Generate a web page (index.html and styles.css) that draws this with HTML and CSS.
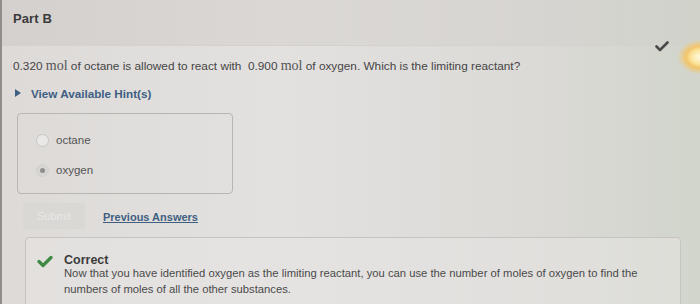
FILE: index.html
```html
<!DOCTYPE html>
<html>
<head>
<meta charset="utf-8">
<link rel="stylesheet" href="styles.css">
</head>
<body>
<div class="page">
  <header class="part-head">
    <span class="part-title">Part B</span>
  </header>
  <div class="status-check">
    <svg width="14" height="11" viewBox="0 0 14 11"><path d="M1.5 5.5 L5 9 L12.5 1.5" fill="none" stroke="#4a4a4a" stroke-width="2.6" stroke-linecap="round" stroke-linejoin="round"/></svg>
  </div>
  <div class="glare"></div>
  <main class="content">
    <p class="question">0.320 <span class="math">mol</span> of octane is allowed to react with &nbsp;0.900 <span class="math">mol</span> of oxygen. Which is the limiting reactant?</p>
    <div class="hint"><span class="tri"></span>View Available Hint(s)</div>
    <div class="choices">
      <label class="choice"><span class="radio"></span>octane</label>
      <label class="choice"><span class="radio checked"></span>oxygen</label>
    </div>
    <div class="actions">
      <button class="submit">Submit</button>
      <a class="prev">Previous Answers</a>
    </div>
    <div class="feedback">
      <svg class="fb-check" width="16" height="13" viewBox="0 0 16 13"><path d="M2 6.5 L6 10.5 L14 2.5" fill="none" stroke="#3f8a45" stroke-width="3.2" stroke-linecap="round" stroke-linejoin="round"/></svg>
      <div class="fb-body">
        <div class="fb-title">Correct</div>
        <div class="fb-text">Now that you have identified oxygen as the limiting reactant, you can use the number of moles of oxygen to find the numbers of moles of all the other substances.</div>
      </div>
    </div>
  </main>
</div>
</body>
</html>
```
FILE: styles.css
```css
html, body {
  margin: 0;
  padding: 0;
}
body {
  width: 700px;
  height: 304px;
  overflow: hidden;
  font-family: "Liberation Sans", Arial, sans-serif;
  background: linear-gradient(90deg, #dddad8 0%, #e3e1df 40%, #dcdad7 75%, #d1d5cb 100%);
}
.page {
  position: relative;
  height: 304px;
  border-left: 2px solid #8f8c89;
  box-sizing: border-box;
}
.part-head {
  height: 46px;
  border-bottom: 1px solid #d4d1cf;
  background: linear-gradient(90deg, rgba(200,194,192,0.4), rgba(205,203,198,0.25));
  padding: 9px 0 0 11px;
  box-sizing: border-box;
}
.part-title {
  font-size: 13px;
  font-weight: bold;
  color: #3a3a3a;
  letter-spacing: 0.1px;
}
.status-check {
  position: absolute;
  left: 653px;
  top: 38px;
}
.glare {
  position: absolute;
  left: 676px;
  top: 40px;
  width: 44px;
  height: 34px;
  border-radius: 50%;
  background: radial-gradient(ellipse at center, #fffbe2 0%, #fbe39a 30%, #f2c46a 45%, rgba(240,200,120,0.4) 62%, rgba(230,220,200,0) 75%);
}
.content {
  padding: 0 0 0 11px;
}
.question {
  margin: 12px 0 0 0;
  font-size: 11.8px;
  color: #454545;
  line-height: 16px;
}
.math {
  font-family: "Liberation Serif", "Times New Roman", serif;
  font-size: 14px;
  color: #555;
}
.hint {
  margin-top: 11px;
  font-size: 11.7px;
  font-weight: bold;
  color: #3e5f83;
  display: flex;
  align-items: center;
  height: 16px;
}
.tri {
  width: 0;
  height: 0;
  border-top: 4.5px solid transparent;
  border-bottom: 4.5px solid transparent;
  border-left: 6px solid #3e5f83;
  margin: 0 10px 0 2px;
}
.choices {
  margin: 12px 0 0 4px;
  width: 216px;
  height: 81px;
  border: 1px solid #b8b6b3;
  border-radius: 4px;
  box-sizing: border-box;
  padding: 19px 0 0 18px;
  display: flex;
  flex-direction: column;
  gap: 16px;
}
.choice {
  display: flex;
  align-items: center;
  font-size: 11.5px;
  color: #555;
  height: 14px;
}
.radio {
  width: 13px;
  height: 13px;
  border-radius: 50%;
  border: 1px solid #c8c6c2;
  background: #e9e8e6;
  margin-right: 7px;
  box-sizing: border-box;
  display: flex;
  align-items: center;
  justify-content: center;
}
.radio.checked {
  border-color: #d2d1ce;
  background: #d6d5d2;
}
.radio.checked::after {
  content: "";
  width: 5px;
  height: 5px;
  border-radius: 50%;
  background: #8e8e8c;
}
.actions {
  margin-top: 9px;
  display: flex;
  align-items: center;
  padding-left: 10px;
  gap: 18px;
}
.submit {
  width: 62px;
  height: 26px;
  border: none;
  border-radius: 2px;
  background: #d9d8d5;
  color: #e8e7e5;
  font-family: "Liberation Sans", Arial, sans-serif;
  font-size: 11px;
  padding: 0;
}
.prev {
  font-size: 11px;
  font-weight: bold;
  color: #3f5f82;
  text-decoration: underline;
  margin-top: 2px;
}
.feedback {
  margin: 8px 0 0 12px;
  width: 656px;
  height: 80px;
  border: 1px solid #c6c3c0;
  border-radius: 4px;
  box-sizing: border-box;
  padding: 15px 0 0 11px;
  display: flex;
  align-items: flex-start;
  background: rgba(232,230,227,0.5);
}
.fb-check {
  margin-top: 2px;
  margin-right: 11px;
}
.fb-title {
  font-size: 12.5px;
  font-weight: bold;
  color: #3c3c3c;
  line-height: 14px;
}
.fb-text {
  font-size: 11.25px;
  color: #4a4a4a;
  line-height: 16px;
  margin-top: -2px;
  width: 600px;
}
```
